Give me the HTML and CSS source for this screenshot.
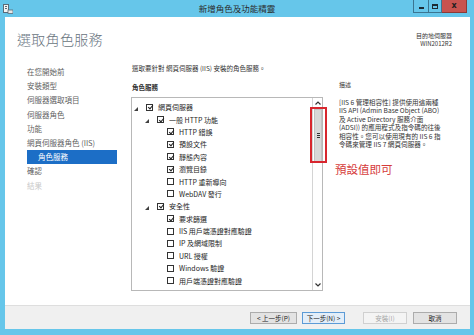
FILE: index.html
```html
<!DOCTYPE html>
<html lang="zh-Hant">
<head>
<meta charset="utf-8">
<title>新增角色及功能精靈</title>
<link rel="stylesheet" href="styles.css">
</head>
<body>
<div class="window">
  <div class="titlebar">
    <div class="tb-left">
      <svg class="app-icon" width="10" height="10" viewBox="0 0 10 10">
        <rect x="0.5" y="0.5" width="5" height="8" fill="#f4f4f4" stroke="#5a6b78" stroke-width="1"/>
        <rect x="2" y="2" width="2" height="1" fill="#5a6b78"/>
        <rect x="2" y="4" width="2" height="1" fill="#5a6b78"/>
        <rect x="5" y="6" width="5" height="3.5" fill="#e8e8e8" stroke="#5a6b78" stroke-width="0.8"/>
      </svg>
    </div>
    <div class="tb-title">新增角色及功能精靈</div>
    <div class="tb-buttons">
      <span class="wb wb-min"><i></i></span>
      <span class="wb wb-max"><i></i></span>
      <span class="wb wb-close">x</span>
    </div>
  </div>

  <div class="client">
    <div class="header">
      <h1 class="page-title">選取角色服務</h1>
      <div class="dest">
        <div>目的地伺服器</div>
        <div>WIN2012R2</div>
      </div>
    </div>

    <div class="body">
      <nav class="nav">
        <div class="nav-item">在您開始前</div>
        <div class="nav-item">安裝類型</div>
        <div class="nav-item">伺服器選取項目</div>
        <div class="nav-item">伺服器角色</div>
        <div class="nav-item">功能</div>
        <div class="nav-item">網頁伺服器角色 (IIS)</div>
        <div class="nav-item nav-active">角色服務</div>
        <div class="nav-item">確認</div>
        <div class="nav-item nav-disabled">結果</div>
      </nav>

      <section class="main">
        <p class="intro">選取要針對 網頁伺服器 (IIS) 安裝的角色服務。</p>
        <div class="label">角色服務</div>
        <div class="tree-wrap">
          <div class="tree">
            <div class="rows">
              <div class="row lv0"><span class="exp"></span><span class="cb on"></span><span class="txt">網頁伺服器</span></div>
              <div class="row lv1"><span class="exp"></span><span class="cb on"></span><span class="txt">一般 HTTP 功能</span></div>
              <div class="row lv2"><span class="cb on"></span><span class="txt">HTTP 錯誤</span></div>
              <div class="row lv2"><span class="cb on"></span><span class="txt">預設文件</span></div>
              <div class="row lv2"><span class="cb on"></span><span class="txt">靜態內容</span></div>
              <div class="row lv2"><span class="cb on"></span><span class="txt">瀏覽目錄</span></div>
              <div class="row lv2"><span class="cb"></span><span class="txt">HTTP 重新導向</span></div>
              <div class="row lv2"><span class="cb"></span><span class="txt">WebDAV 發行</span></div>
              <div class="row lv1"><span class="exp"></span><span class="cb on"></span><span class="txt">安全性</span></div>
              <div class="row lv2"><span class="cb on"></span><span class="txt">要求篩選</span></div>
              <div class="row lv2"><span class="cb"></span><span class="txt">IIS 用戶端憑證對應驗證</span></div>
              <div class="row lv2"><span class="cb"></span><span class="txt">IP 及網域限制</span></div>
              <div class="row lv2"><span class="cb"></span><span class="txt">URL 授權</span></div>
              <div class="row lv2"><span class="cb"></span><span class="txt">Windows 驗證</span></div>
              <div class="row lv2"><span class="cb"></span><span class="txt">用戶端憑證對應驗證</span></div>
              <div class="row lv2 row-cut"><span class="cb"></span></div>
            </div>
            <div class="scrollbar">
              <div class="sb-btn">
                <svg width="6" height="4" viewBox="0 0 6 4"><path d="M0.5 3.5 L3 1 L5.5 3.5" fill="none" stroke="#333" stroke-width="1.2"/></svg>
              </div>
              <div class="sb-track">
                <div class="sb-thumb"><span></span><span></span><span></span></div>
              </div>
              <div class="sb-btn">
                <svg width="6" height="4" viewBox="0 0 6 4"><path d="M0.5 0.5 L3 3 L5.5 0.5" fill="none" stroke="#333" stroke-width="1.2"/></svg>
              </div>
            </div>
          </div>
          <div class="callout"></div>
        </div>
      </section>

      <aside class="desc">
        <div class="desc-title">描述</div>
        <p class="desc-text">[IIS 6 管理相容性] 提供使用這兩種<br>IIS API (Admin Base Object (ABO)<br>及 Active Directory 服務介面<br>(ADSI)) 的應用程式及指令碼的往後<br>相容性。您可以使用現有的 IIS 6 指<br>令碼來管理 IIS 7 網頁伺服器。</p>
        <div class="note">預設值即可</div>
      </aside>
    </div>

    <div class="footer">
      <button class="btn btn-prev">&lt; 上一步(P)</button>
      <button class="btn btn-default">下一步(N) &gt;</button>
      <button class="btn btn-disabled">安裝(I)</button>
      <button class="btn btn-cancel">取消</button>
    </div>
  </div>
</div>
</body>
</html>
```

FILE: styles.css
```css
* { box-sizing: border-box; }

html, body {
  margin: 0;
  padding: 0;
  width: 474px;
  height: 335px;
  overflow: hidden;
}

body {
  font-family: "Noto Sans CJK TC", "Noto Sans", sans-serif;
  color: #222;
}

.window {
  width: 474px;
  height: 335px;
  background: #66c6ea;
  display: flex;
  flex-direction: column;
}

/* title bar */
.titlebar {
  height: 17px;
  display: grid;
  grid-template-columns: 1fr auto 1fr;
  align-items: start;
}
.tb-left {
  padding: 4px 0 0 3px;
  display: flex;
}
.tb-title {
  font-size: 8.5px;
  line-height: 17px;
  color: #2a2a2a;
}
.tb-buttons {
  justify-self: end;
  display: flex;
  margin-right: 7px;
}
.wb {
  height: 13px;
  display: flex;
  align-items: center;
  justify-content: center;
  border: 1px solid #3b7591;
  border-top: none;
  background: #66c6ea;
}
.wb-min { width: 15px; border-right: none; }
.wb-min i { width: 5px; height: 2px; background: #1d2a33; margin-top: 3px; }
.wb-max { width: 14px; }
.wb-max i { width: 6px; height: 5px; border: 1px solid #1d2a33; border-top-width: 2px; }
.wb-close {
  width: 25px;
  background: #c8534f;
  border-color: #8c3a36;
  border-left: none;
  color: #1f1f1f;
  font-family: "DejaVu Sans", sans-serif;
  font-weight: bold;
  font-size: 8px;
  line-height: 1;
}

/* client */
.client {
  flex: 1;
  margin: 0 4px 6px 5px;
  background: #fff;
  display: flex;
  flex-direction: column;
}

.header {
  height: 44px;
  display: flex;
  justify-content: space-between;
  padding: 13px 18px 0 12px;
}
.page-title {
  margin: 0;
  font-size: 14px;
  line-height: 19px;
  font-weight: 300;
  color: #687480;
  letter-spacing: 0.3px;
}
.dest {
  text-align: right;
  font-size: 6px;
  line-height: 7.5px;
  color: #333;
  padding-top: 2px;
}

.body {
  flex: 1;
  display: flex;
}

/* nav */
.nav {
  width: 114px;
  padding-top: 4px;
  display: flex;
  flex-direction: column;
}
.nav-item {
  margin-left: 22px;
  width: 90px;
  height: 14.2px;
  line-height: 14.2px;
  font-size: 7.5px;
  color: #5f5f5f;
  white-space: nowrap;
}
.nav-active {
  background: #1c6ec6;
  color: #fff;
  padding-left: 11px;
}
.nav-disabled { color: #c9c9c9; }

/* main */
.main {
  margin-left: 12px;
  width: 192px;
  display: flex;
  flex-direction: column;
}
.intro {
  margin: 2px 0 0 1px;
  font-size: 6.5px;
  line-height: 10px;
  color: #333;
  white-space: nowrap;
}
.label {
  margin: 9px 0 0 1px;
  font-size: 6.5px;
  line-height: 10px;
  font-weight: bold;
  color: #333;
}
.tree-wrap {
  position: relative;
  margin-top: 5px;
}
.tree {
  height: 194px;
  border: 1px solid #b8b8b8;
  display: flex;
  overflow: hidden;
}
.rows {
  flex: 1;
  padding: 3px 0 0 1px;
  overflow: hidden;
}
.row {
  height: 12.4px;
  display: flex;
  align-items: center;
  font-size: 7px;
  color: #262626;
  white-space: nowrap;
}
.row-cut { align-items: flex-start; padding-top: 6px; }
.lv0 { padding-left: 1px; }
.lv1 { padding-left: 12px; }
.lv2 { padding-left: 34px; }
.exp {
  width: 12px;
  height: 7px;
  display: flex;
  align-items: flex-end;
}
.exp::before {
  content: "";
  width: 0;
  height: 0;
  border-left: 4px solid transparent;
  border-bottom: 4px solid #404040;
}
.cb {
  width: 7px;
  height: 7px;
  border: 1px solid #333;
  background: #fff;
  margin-right: 5px;
  position: relative;
  flex: none;
}
.cb.on::after {
  content: "";
  position: absolute;
  left: 1.5px;
  top: -0.5px;
  width: 2px;
  height: 4px;
  border-right: 1.2px solid #222;
  border-bottom: 1.2px solid #222;
  transform: rotate(40deg);
}

.scrollbar {
  width: 10px;
  border-left: 1px solid #d4d4d4;
  display: flex;
  flex-direction: column;
  background: #fff;
}
.sb-btn {
  height: 10px;
  display: flex;
  align-items: center;
  justify-content: center;
}
.sb-track {
  flex: 1;
  padding: 1px 0 0 1px;
}
.sb-thumb {
  height: 53px;
  width: 8px;
  background: #d8d8d8;
  border: 1px solid #c2c2c2;
  display: flex;
  flex-direction: column;
  align-items: center;
  justify-content: center;
  gap: 1px;
}
.sb-thumb span {
  width: 3px;
  height: 1px;
  background: #333;
}

.callout {
  position: absolute;
  left: 179px;
  top: 10px;
  width: 17px;
  height: 56px;
  border: 2px solid #d8262e;
}

/* description */
.desc {
  margin-left: 16px;
  width: 120px;
  padding-top: 19px;
}
.desc-title {
  font-size: 6px;
  line-height: 10px;
  color: #333;
}
.desc-text {
  margin: 8px 0 0;
  font-size: 6.6px;
  line-height: 8.4px;
  color: #333;
  white-space: nowrap;
}
.note {
  margin-top: 14px;
  margin-left: -4px;
  font-size: 11.5px;
  line-height: 14px;
  color: #d63b3b;
}

/* footer */
.footer {
  height: 24px;
  background: #f0f0f0;
  border-top: 1px solid #dedede;
  display: flex;
  justify-content: flex-end;
  align-items: center;
  gap: 5px;
  padding-right: 13px;
}
.btn {
  width: 44px;
  height: 12px;
  padding: 0;
  font-family: inherit;
  font-size: 6.5px;
  line-height: 10px;
  color: #222;
  background: #e3e3e3;
  border: 1px solid #acacac;
  border-radius: 0;
}
.btn-prev { width: 47px; }
.btn-default {
  width: 43px;
  background: #e3eef9;
  border-color: #5c9bd6;
}
.btn-disabled {
  margin-left: 13px;
  background: #f4f4f4;
  border-color: #d0d0d0;
  color: #a8a8a8;
}
.btn-cancel { margin-left: 1px; }
```
